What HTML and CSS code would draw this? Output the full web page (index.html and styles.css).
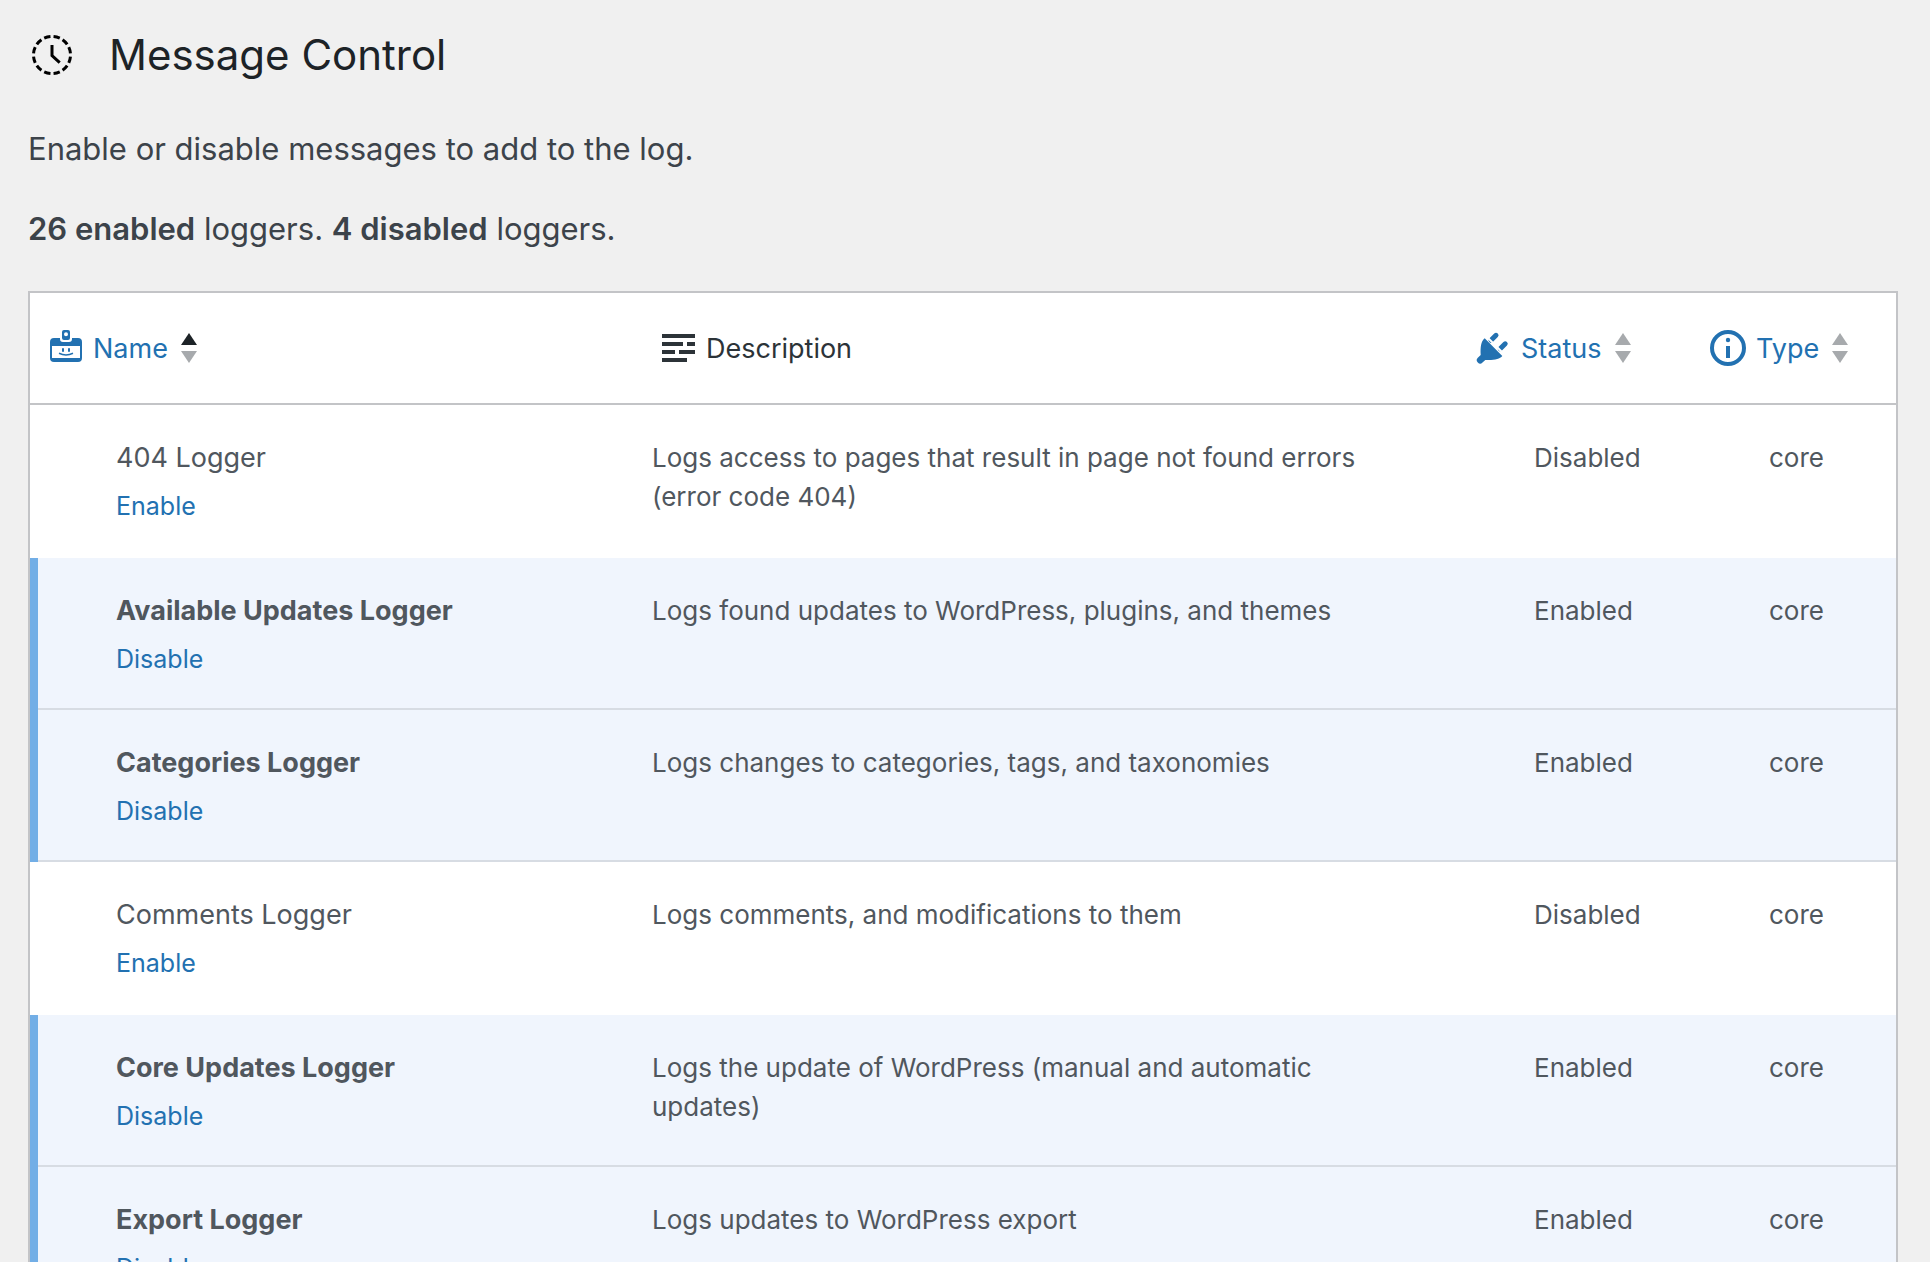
FILE: index.html
```html
<!DOCTYPE html>
<html lang="en">
    <head>
        <meta charset="UTF-8" />
        <meta name="viewport" content="width=device-width, initial-scale=1.0" />
        <title>Message Control</title>
        <link rel="stylesheet" href="styles.css">
    </head>
    <body>
        <main class="wrap">
            <header class="pageHeader">
                <svg class="pageIcon" viewBox="0 0 48 48" aria-hidden="true">
                    <circle cx="24" cy="24" r="18.5" pathLength="144" fill="none" stroke="#000" stroke-width="3" stroke-dasharray="8 4" stroke-dashoffset="-2" />
                    <path d="M24 14v10.500l7.700 7.200" fill="none" stroke="#000" stroke-width="3" />
                </svg>
                <h1>Message Control</h1>
            </header>

            <p class="intro">Enable or disable messages to add to the log.</p>
            <p class="intro"><strong>26 enabled</strong> loggers. <strong>4 disabled</strong> loggers.</p>

            <table class="loggers">
                <colgroup>
                    <col class="colName" />
                    <col />
                    <col class="colStatus" />
                    <col class="colType" />
                </colgroup>
                <thead>
                    <tr>
                        <th scope="col" aria-sort="ascending">
                            <a class="heading" href="#">
                                <svg class="icon" viewBox="0 0 40 40" aria-hidden="true">
                                    <path fill-rule="evenodd" d="M8 10h6v1a3 3 0 0 0 3 3h6a3 3 0 0 0 3-3v-1h6a4 4 0 0 1 4 4v16a4 4 0 0 1-4 4H8a4 4 0 0 1-4-4V14a4 4 0 0 1 4-4zM6 18v12h28V18z" />
                                    <path fill-rule="evenodd" d="M18 2h4a2 2 0 0 1 2 2v6a2 2 0 0 1-2 2h-4a2 2 0 0 1-2-2V4a2 2 0 0 1 2-2zM20 4.300a2 2 0 1 0 0 4 2 2 0 0 0 0-4z" />
                                    <path d="M16 20.300h2v3.500h-2zM22 20.300h2v3.500h-2z" />
                                    <path d="M13 25.300q7 3.200 14 0" fill="none" stroke="currentColor" stroke-width="1.500" />
                                </svg>
                                <span>Name</span>
                                <svg class="sorter" viewBox="0 0 16 30" aria-hidden="true">
                                    <path class="sorted" d="M8 0l8 12H0z" />
                                    <path d="M0 18h16L8 30z" />
                                </svg>
                            </a>
                        </th>
                        <th scope="col">
                            <span class="heading">
                                <svg class="icon" viewBox="0 0 40 40" aria-hidden="true">
                                    <path d="M3 6h33v4H3zM3 14h21v4H3zM28 14h8v4h-8zM3 22h13v4H3zM20 22h16v4H20zM3 30h25v4H3z" />
                                </svg>
                                <span>Description</span>
                            </span>
                        </th>
                        <th scope="col">
                            <a class="heading" href="#">
                                <svg class="icon" viewBox="0 0 40 40" aria-hidden="true">
                                    <path d="M10.700 10.300L28.300 28c-2.500 3.300-8.800 4.500-17 4l-2.800 2.500a3.300 3.300 0 0 1-4.700-4.700L6.700 27c-.4-8 .3-13.500 4-16.700z" />
                                    <path d="M17 12.300l5-5M26.200 20.800l5-5" fill="none" stroke="currentColor" stroke-width="5" stroke-linecap="round" />
                                    <path d="M12.500 8.500L30 26" fill="none" stroke="#fff" stroke-width="2" />
                                </svg>
                                <span>Status</span>
                                <svg class="sorter" viewBox="0 0 16 30" aria-hidden="true">
                                    <path d="M8 0l8 12H0z" />
                                    <path d="M0 18h16L8 30z" />
                                </svg>
                            </a>
                        </th>
                        <th scope="col">
                            <a class="heading" href="#">
                                <svg class="icon" viewBox="0 0 40 40" aria-hidden="true">
                                    <circle cx="19" cy="20" r="16" fill="none" stroke="currentColor" stroke-width="4" />
                                    <circle cx="19" cy="12" r="2.200" />
                                    <path d="M17 18h4v12h-4z" />
                                </svg>
                                <span>Type</span>
                                <svg class="sorter" viewBox="0 0 16 30" aria-hidden="true">
                                    <path d="M8 0l8 12H0z" />
                                    <path d="M0 18h16L8 30z" />
                                </svg>
                            </a>
                        </th>
                    </tr>
                </thead>
                <tbody>
                    <tr>
                        <td class="name">404 Logger <a href="#">Enable</a></td>
                        <td class="description">Logs access to pages that result in page not found errors (error code 404)</td>
                        <td class="status">Disabled</td>
                        <td class="type">core</td>
                    </tr>
                    <tr class="enabled">
                        <td class="name"><strong>Available Updates Logger</strong> <a href="#">Disable</a></td>
                        <td class="description">Logs found updates to WordPress, plugins, and themes</td>
                        <td class="status">Enabled</td>
                        <td class="type">core</td>
                    </tr>
                    <tr class="enabled">
                        <td class="name"><strong>Categories Logger</strong> <a href="#">Disable</a></td>
                        <td class="description">Logs changes to categories, tags, and taxonomies</td>
                        <td class="status">Enabled</td>
                        <td class="type">core</td>
                    </tr>
                    <tr>
                        <td class="name">Comments Logger <a href="#">Enable</a></td>
                        <td class="description">Logs comments, and modifications to them</td>
                        <td class="status">Disabled</td>
                        <td class="type">core</td>
                    </tr>
                    <tr class="enabled">
                        <td class="name"><strong>Core Updates Logger</strong> <a href="#">Disable</a></td>
                        <td class="description">Logs the update of WordPress (manual and automatic updates)</td>
                        <td class="status">Enabled</td>
                        <td class="type">core</td>
                    </tr>
                    <tr class="enabled">
                        <td class="name"><strong>Export Logger</strong> <a href="#">Disable</a></td>
                        <td class="description">Logs updates to WordPress export</td>
                        <td class="status">Enabled</td>
                        <td class="type">core</td>
                    </tr>
                </tbody>
            </table>
        </main>
    </body>
</html>
```
FILE: styles.css
```css
*,
*::before,
*::after {
    box-sizing: border-box;
}

body {
    margin: 0;
    background: #f0f0f0;
    color: #3c434a;
    font-family: Inter, "Liberation Sans", sans-serif;
    font-size: 26px;
    line-height: 39px;
}

a {
    color: #2271b1;
    text-decoration: none;
}

a:hover {
    color: #135e96;
}

.wrap {
    padding: 24px 32px 0 28px;
}

/* Page title */
.pageHeader {
    display: flex;
    align-items: center;
    gap: 33px;
    height: 62px;
    margin-bottom: 39px;
}

.pageIcon {
    width: 48px;
    height: 48px;
}

h1 {
    margin: 0;
    color: #1d2327;
    font-size: 42px;
    font-weight: 400;
    line-height: 62px;
}

.intro {
    margin: 32px 0;
    font-size: 31px;
    line-height: 48px;
}

.intro strong {
    font-weight: 600;
}

/* Logger list */
.loggers {
    width: 100%;
    margin-top: 38px;
    border: 2px solid #c3c4c7;
    border-spacing: 0;
    table-layout: fixed;
    background: #fff;
    color: #50575e;
}

.colName {
    width: 613px;
}

.colStatus {
    width: 235px;
}

.colType {
    width: 203px;
}

th {
    height: 112px;
    padding: 0 16px;
    border-bottom: 2px solid #c3c4c7;
    color: #2c3338;
    font-size: 27px;
    font-weight: 400;
    text-align: left;
}

.heading {
    display: flex;
    align-items: center;
    gap: 7px;
}

.icon {
    width: 40px;
    height: 40px;
    fill: currentColor;
}

.sorter {
    width: 16px;
    height: 30px;
    margin-left: 6px;
    fill: #a7aaad;
}

.sorted {
    fill: #1d2327;
}

td {
    padding: 32px 0;
    vertical-align: baseline;
}

.name {
    padding-left: 86px;
    font-size: 27px;
    line-height: 42px;
}

.name strong {
    font-weight: 700;
}

.name a {
    display: block;
    margin-top: 8px;
    font-size: 25px;
    line-height: 39px;
}

.description {
    padding-right: 80px;
    padding-left: 9px;
}

.status,
.type {
    padding-left: 76px;
}

.enabled td {
    padding-bottom: 31px;
    background: #f0f5fd;
    box-shadow: inset 0 -2px 0 rgba(0, 0, 0, 0.1);
}

.enabled .name {
    padding-left: 78px;
    border-left: 8px solid #72aee6;
}
```
